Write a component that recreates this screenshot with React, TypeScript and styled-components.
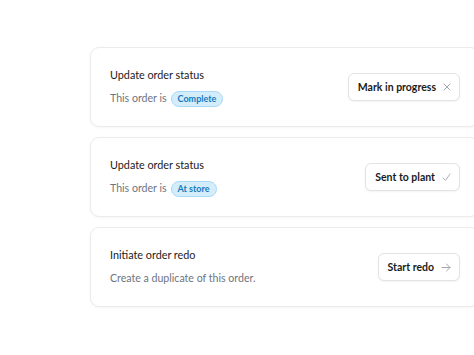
import React from 'react';
import styled, { createGlobalStyle } from 'styled-components';

const GlobalStyle = createGlobalStyle`
  html, body {
    margin: 0;
    padding: 0;
    background: #ffffff;
    overflow: hidden;
  }
  body {
    font-family: Lato, "Open Sans", sans-serif;
    -webkit-font-smoothing: antialiased;
  }
`;

const Page = styled.div`
  width: 474px;
  height: 355px;
  padding: 47px 0 0 90px;
  box-sizing: border-box;
  display: flex;
  flex-direction: column;
  gap: 10px;
  overflow: hidden;
`;

const Card = styled.div`
  width: 389px;
  height: 80px;
  flex-shrink: 0;
  box-sizing: border-box;
  padding: 0 18px 0 19px;
  display: flex;
  align-items: center;
  justify-content: space-between;
  background: #fff;
  border: 1px solid #ebebeb;
  border-radius: 9px;
  box-shadow: 0 1px 3px rgba(0, 0, 0, 0.04);
`;

const Info = styled.div`
  display: flex;
  flex-direction: column;
  gap: 8px;
`;

const Title = styled.div`
  font-size: 10.8px;
  color: #1a1a1a;
  line-height: 15px;
`;

const Desc = styled.div`
  display: flex;
  align-items: center;
  gap: 4px;
  font-size: 10.6px;
  color: #6e7480;
  line-height: 17px;
`;

const Badge = styled.span`
  display: inline-flex;
  align-items: center;
  height: 16px;
  box-sizing: border-box;
  padding: 0 6px;
  border-radius: 8px;
  background: #d4edfb;
  border: 1px solid #a9d9f4;
  color: #1779bd;
  font-size: 9px;
  font-weight: 700;
`;

const Button = styled.button`
  display: inline-flex;
  align-items: center;
  gap: 7px;
  height: 28px;
  padding: 0 8px 0 9px;
  background: #fff;
  border: 1px solid #e3e3e3;
  border-radius: 6px;
  box-shadow: 0 1px 2px rgba(0, 0, 0, 0.05);
  font-family: Lato, "Open Sans", sans-serif;
  font-size: 10.5px;
  font-weight: 700;
  color: #1a1a1a;
  cursor: pointer;
  svg {
    color: #a3a7ad;
  }
`;

const XIcon = () => (
  <svg width="8" height="8" viewBox="0 0 8 8" fill="none" stroke="currentColor" strokeWidth="1" strokeLinecap="round">
    <path d="M1 1l6 6M7 1l-6 6" />
  </svg>
);

const CheckIcon = () => (
  <svg width="9" height="8" viewBox="0 0 9 8" fill="none" stroke="currentColor" strokeWidth="0.9" strokeLinecap="round" strokeLinejoin="round">
    <path d="M1 5l2.5 2.5L8 1" />
  </svg>
);

const ArrowIcon = () => (
  <svg width="10" height="9" viewBox="0 0 10 9" fill="none" stroke="currentColor" strokeWidth="1" strokeLinecap="round" strokeLinejoin="round">
    <path d="M1 4.5h8M5.5 1l3.5 3.5L5.5 8" />
  </svg>
);

const App: React.FC = () => {
  return (
    <>
      <GlobalStyle />
      <Page>
        <Card>
          <Info>
            <Title>Update order status</Title>
            <Desc>
              This order is <Badge>Complete</Badge>
            </Desc>
          </Info>
          <Button>
            Mark in progress <XIcon />
          </Button>
        </Card>
        <Card>
          <Info>
            <Title>Update order status</Title>
            <Desc>
              This order is <Badge>At store</Badge>
            </Desc>
          </Info>
          <Button>
            Sent to plant <CheckIcon />
          </Button>
        </Card>
        <Card>
          <Info>
            <Title>Initiate order redo</Title>
            <Desc>Create a duplicate of this order.</Desc>
          </Info>
          <Button>
            Start redo <ArrowIcon />
          </Button>
        </Card>
      </Page>
    </>
  );
};

export default App;
